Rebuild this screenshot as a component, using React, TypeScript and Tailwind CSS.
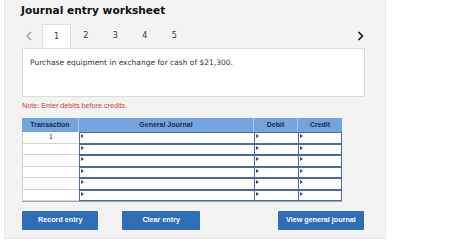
import React from "react";

const verdana = { fontFamily: '"DejaVu Sans", Verdana, sans-serif' };
const arial = { fontFamily: '"Liberation Sans", Arial, sans-serif' };

function Marker() {
  return (
    <span className="absolute left-[1px] top-[1px] w-0 h-0 border-t-[2px] border-b-[2px] border-l-[3px] border-t-transparent border-b-transparent border-l-[#2c4f8a]" />
  );
}

export default function App() {
  const rows = ["1", "", "", "", "", ""];
  return (
    <div className="w-[474px] h-[249px] bg-white overflow-hidden">
      <div className="ml-[4px] w-[382px] h-[239px] bg-[#f3f3f3] border-l border-r border-b border-[#e6e6e6] pl-[16px] pr-[21px]">
        <div className="h-[24px] pt-[3px] text-[10.6px] font-bold text-[#111] leading-[15px]" style={verdana}>
          Journal entry worksheet
        </div>
        <div className="h-[24px] flex items-stretch text-[8px] text-[#333]" style={verdana}>
          <div className="w-[21px] flex items-center pl-[5px] text-[#999]">
            <svg width="6" height="10" viewBox="0 0 6 10"><path d="M5 1 L1 5 L5 9" fill="none" stroke="#999" strokeWidth="1.2" /></svg>
          </div>
          <div className="w-[29px] bg-white border-t border-l border-r border-[#dcdcdc] flex items-center justify-center">1</div>
          {["2", "3", "4", "5"].map((n) => (
            <div key={n} className="w-[29.5px] flex items-center justify-center">{n}</div>
          ))}
          <div className="flex-1 flex items-center justify-end pr-[0px]">
            <svg width="7" height="10" viewBox="0 0 7 10"><path d="M1.5 1 L5.5 5 L1.5 9" fill="none" stroke="#111" strokeWidth="1.6" /></svg>
          </div>
        </div>
        <div className="h-[49px] bg-white border border-[#dcdcdc] ml-[1px] w-[343px] pl-[7px] pt-[8px] text-[7.5px] text-[#333]" style={verdana}>
          Purchase equipment in exchange for cash of $21,300.
        </div>
        <div className="h-[21px] pt-[4px] pl-[1px] text-[7.2px] text-[#c8423b]" style={arial}>
          Note: Enter debits before credits.
        </div>
        <div className="ml-[1px] w-[320px]" style={arial}>
          <div className="flex h-[14px] bg-[#74a4dd] text-[7px] font-bold text-[#1c2c4c]">
            <div className="w-[57px] flex items-center justify-center border-r border-[#a9c6ea]">Transaction</div>
            <div className="w-[175px] flex items-center justify-center border-r border-[#a9c6ea]">General Journal</div>
            <div className="w-[44px] flex items-center justify-center border-r border-[#a9c6ea]">Debit</div>
            <div className="flex-1 flex items-center justify-center">Credit</div>
          </div>
          <div className="border-b-[1.5px] border-[#9aa6b8]">
            {rows.map((r, i) => (
              <div key={i} className="flex h-[11.5px] text-[6.8px] text-[#333]">
                <div className="w-[57px] bg-white border-l border-b border-[#d4d4d4] flex items-center justify-center">{r}</div>
                <div className="relative w-[175px] bg-white border-l-[1.5px] border-t border-b border-[#4a6a9c]"><Marker /></div>
                <div className="relative w-[44px] bg-white border-l-[1.5px] border-t border-b border-[#4a6a9c]"><Marker /></div>
                <div className="relative flex-1 bg-white border-l-[1.5px] border-r-[1.5px] border-t border-b border-[#4a6a9c]"><Marker /></div>
              </div>
            ))}
          </div>
        </div>
        <div className="mt-[9px] flex text-[7.2px] font-bold text-white" style={arial}>
          <div className="ml-[1px] w-[79px] h-[19px] bg-[#2f6db7] rounded-[1px] flex items-center justify-center">Record entry</div>
          <div className="ml-[24px] w-[80px] h-[19px] bg-[#2f6db7] rounded-[1px] flex items-center justify-center">Clear entry</div>
          <div className="ml-[78px] w-[89px] h-[19px] bg-[#2f6db7] rounded-[1px] flex items-center justify-center">View general journal</div>
        </div>
      </div>
    </div>
  );
}
